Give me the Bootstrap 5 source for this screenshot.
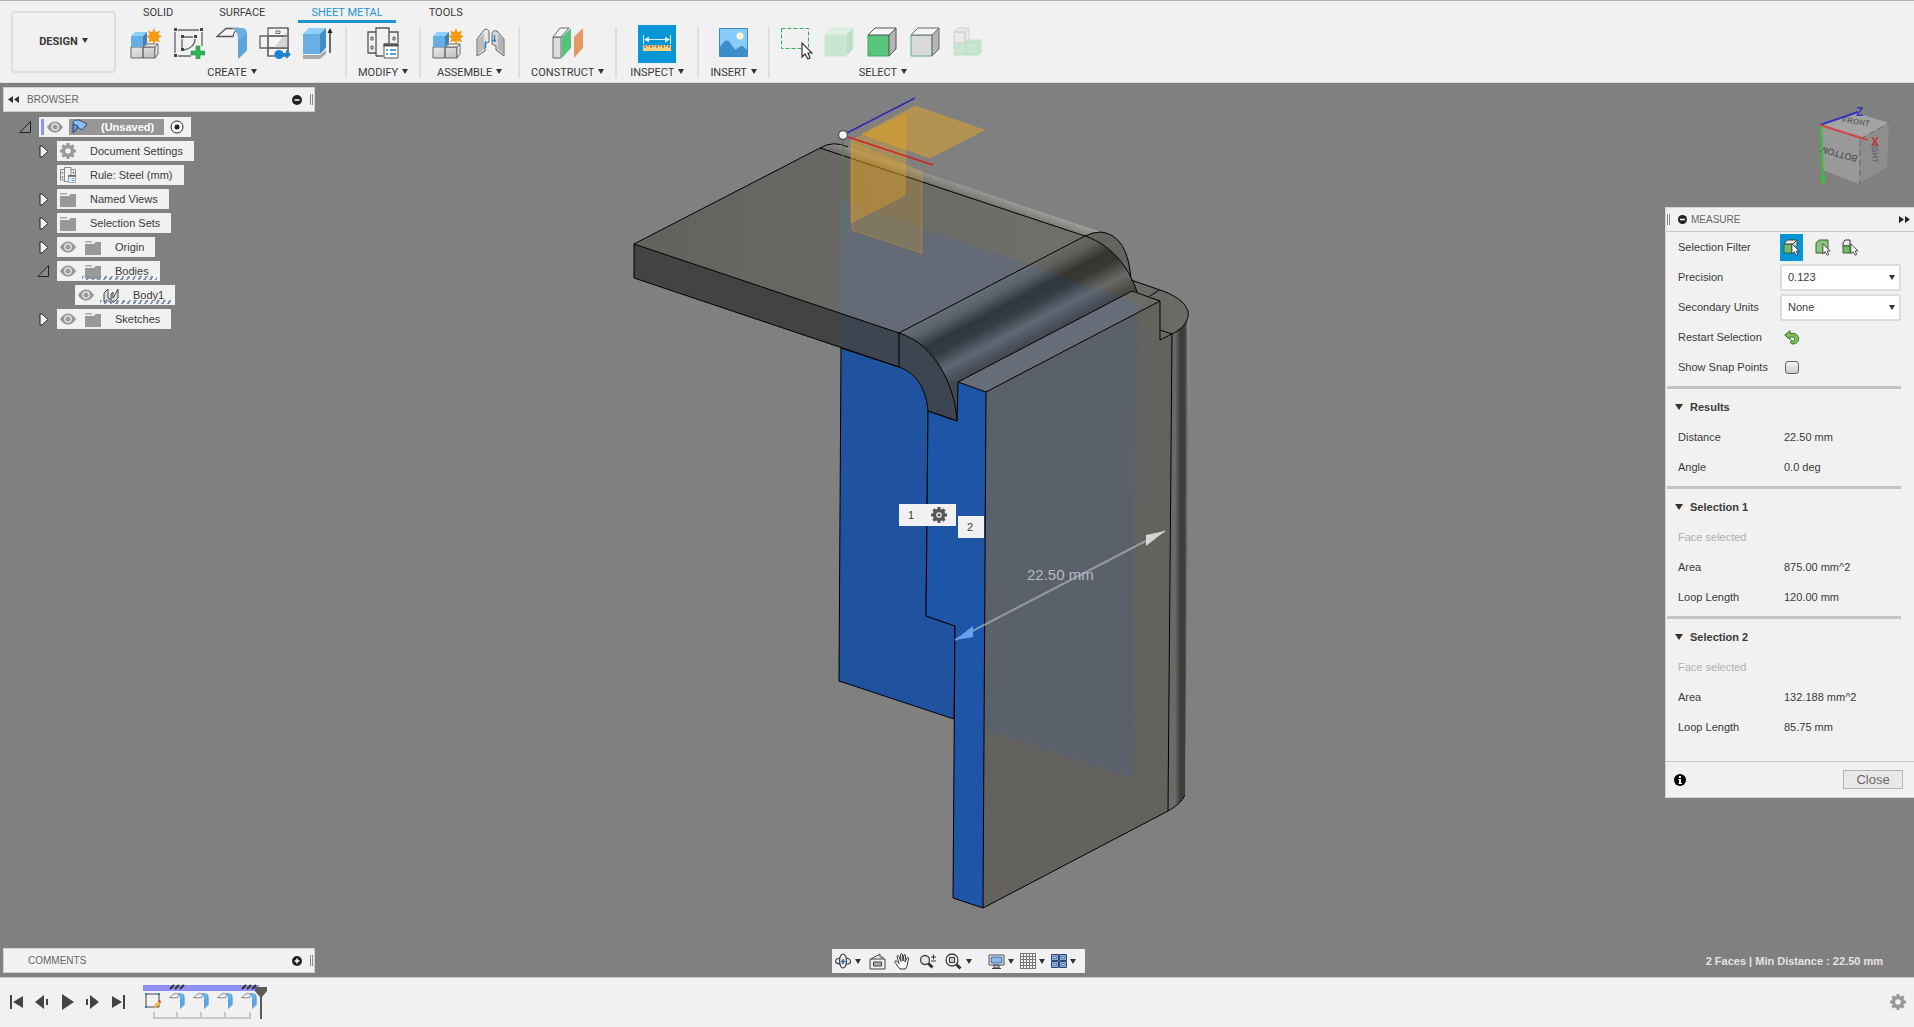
<!DOCTYPE html>
<html lang="en">
<head>
<meta charset="utf-8">
<meta name="viewport" content="width=device-width, initial-scale=1">
<title>Sheet Metal Design</title>
<link rel="stylesheet" href="https://cdn.jsdelivr.net/npm/bootstrap@5.3.0/dist/css/bootstrap.min.css">
<style>
body{font:11px/14px "Liberation Sans",Arial,sans-serif;color:#3a3a3a;background:#808080}
svg{display:block;flex:none}
.bare{border:0;background:none;padding:0;color:inherit;font:inherit;line-height:14px}
.topbar{background:#f1f1f1;border-top:1px solid #b4b4b4;border-bottom:1px solid #dcdcdc;height:83px;font-family:Roboto,"Liberation Sans",sans-serif}
.workspace-btn{border:2px solid #dedede;border-radius:4px;width:105px;height:62px;margin:10px 14px 0 11px;font-weight:700;background:#f1f1f1;color:#3a3a3a}
.tab-row{gap:20px;height:22px}
.tab-row a{color:#3a3a3a;text-decoration:none;padding:5px 13px 0}
.tab-row a.active{color:#1b94d2;border-bottom:3px solid #1b94d2}
.tool-group{padding:0 11px;border-right:2px solid #dedede;height:51px}
.tool-group:first-child{padding-left:0}
.tool-group:last-child{border:0}
.tool-group.roomy{padding:0 13px}
.tool-icons{gap:11px;height:39px;flex:none}
.inspect-on{background:#0696d7;width:38px;height:38px;margin:-2px 0 0}
.caret::after{content:"";display:inline-block;border:3px solid transparent;border-top:5px solid #333;border-bottom:0;margin-left:4px;vertical-align:2px}
.stage{min-height:0}
.scene{position:absolute;inset:0;width:100%;height:100%}
.cube{position:absolute;right:0;top:7px}
.side-left{position:absolute;left:3px;top:4px;width:312px}
.bar-title{background:#f1f1f1;border:1px solid #d0d0d0;height:25px;color:#666;padding:0 1px 0 4px;font-size:10px}
.grip{width:3px;height:11px;border:solid #888;border-width:0 1px}
.tree{padding-top:5px;gap:4px}
.tree-row{height:20px}
.tree-child{padding-left:18px}
.twist{width:46px}
.twist-root{width:28px}
.tree-box{background:#f1f1f1;height:20px;padding:0 11px 0 3px;gap:9px;position:relative;margin-left:8px}
.tree-box span{margin-left:5px}
.twist-root + .tree-box{padding:0 7px 0 2px;gap:3px}
.root-name{background:#969696;color:#fff;font-weight:700;height:16px;padding:0 10px 0 2px;margin:0 3px}
.root-bar{width:3px;height:16px;background:#8f8ff5}
.hatched::after{content:"";position:absolute;left:25px;right:3px;bottom:1px;height:4px;background:repeating-linear-gradient(120deg,#8490ad 0 2px,transparent 2px 5px)}
.comments{position:absolute;left:3px;bottom:4px;width:312px}
.navbar-view{position:absolute;left:832px;bottom:4px;height:24px;background:#f1f1f1;padding:0 9px 0 3px}
.navbar-view button + button{margin-left:8px}
.navbar-view .caret + .caret{margin-left:6px}
.navbar-view .caret::after{margin-left:3px}
.status{position:absolute;right:31px;bottom:9px;color:#e4e4e4;font-weight:700}
.measure{position:absolute;right:0;top:124px;width:249px;background:#f1f1f1;border:1px solid #d4d4d4;border-right:0}
.measure-head{height:24px;border-bottom:1px solid #c8c8c8;color:#666;font-size:10px;padding:0 4px 0 1px}
.line{height:30px;padding-left:12px}
.line > :first-child{width:106px;flex:none}
.line > .wide{margin-left:-4px}
.form-select{width:121px;height:27px;border:2px solid #dcdcdc;border-radius:2px;font-size:11px;line-height:14px;color:#3a3a3a;padding:0 6px;background-size:6px 5px;background-position:right 4px center;--bs-form-select-bg-img:url("data:image/svg+xml,%3csvg xmlns='http://www.w3.org/2000/svg' viewBox='0 0 6 5'%3e%3cpath d='M0 0h6L3 5z' fill='%23333'/%3e%3c/svg%3e")}
.rule-line{height:3px;background:#c3c3c3;margin:4px 13px 3px 1px}
.section-title{height:30px;padding-left:9px;font-weight:700;gap:7px}
.dim{color:#b0b0b0}
.filter-btn{width:23px;height:27px;display:grid;place-items:center}
.filter-on{background:#0696d7}
.snap{appearance:none;width:14px;height:13px;border:1px solid #666;border-radius:3px;background:linear-gradient(#f6f6f6,#c8c8c8);margin-left:1px}
.measure-foot{height:36px;border-top:1px solid #c8c8c8;margin-top:19px;padding:0 11px 0 8px}
.close-btn{width:60px;height:19px;border:1px solid #b4b4b4;background:#e9e9e9;color:#666;font-size:13px;line-height:14px;padding:0}
.bottombar{height:50px;background:#f1f1f1;border-top:1px solid #c8c8c8;padding:0 8px 2px 10px}
.play{gap:12px}
.timeline{margin-left:18px;padding-top:7px;position:relative;height:47px;width:116px}
.track{height:6px;background:#8f8ff5}
.steps{gap:8px;padding:2px 0 0 2px}
.overlay-svg{position:absolute;left:0;top:4px}
.pick{font:11px "Liberation Sans",sans-serif}
.pick-btn{width:18px;height:18px;display:block}
</style>
</head>
<body class="vh-100 d-flex flex-column overflow-hidden">
<svg width="0" height="0" class="position-absolute" aria-hidden="true">
 <defs>
  <linearGradient id="gBox" x2="1" y2="1"><stop stop-color="#ececec"/><stop offset="1" stop-color="#bdbdbd"/></linearGradient>
  <symbol id="newcomp" viewBox="0 0 32 32"><path d="M1 20h12v11H1zM13 20h12v11H13z" fill="url(#gBox)" stroke="#666"/><path d="M13 20l4-3h11l-3 3zM25 31l3-4V17l-3 3z" fill="#eee" stroke="#666"/><path d="M1 9h12v11H1z" fill="#67aee2"/><path d="M1 9l4-4h12l-4 4z" fill="#8fd0fa"/><path d="M13 9l4-4v11l-4 4z" fill="#3c82bb"/><path d="M24 1l1.700 4.300L30 3.500l-1.600 4.300L32 9.500l-3.600 1.700L30 15.500l-4.300-1.700L24 18l-1.700-4.200-4.300 1.700 1.600-4.300L16 9.500l3.600-1.700L18 3.500l4.300 1.800z" fill="#f29b13"/></symbol>
  <symbol id="sketch" viewBox="0 0 32 32"><path d="M5 3h21M2 5v21M29 5v14M5 29h13" stroke="#666" stroke-width="1.300" fill="none"/><path d="M11 10h9M9 12v9M22 12c0 6-5 10-11 11" stroke="#666" stroke-width="1.300" fill="none"/><path d="M1 1h3v3H1zM27 1h3v3h-3zM1 27h3v3H1zM8 8h3v3H8zM21 8h3v3h-3zM8 21h3v3H8z" fill="#444"/><path d="M23 19h4v5h5v4h-5v4h-4v-4h-5v-4h5z" fill="#2fb457" stroke="#1d9143" stroke-width=".6"/></symbol>
  <symbol id="flange" viewBox="0 0 32 32"><path d="M10 1.500h13c-3 1-5 3-6 8H1z" fill="#f5f5f5" stroke="#555" stroke-width="1.300"/><path d="M16 1h10c3 0 5 2 5 6v16l-9 9V14c0-8-2-11-6-13z" fill="#68afe3"/><path d="M22 14v18l9-9V7z" fill="#5ba5dc"/></symbol>
  <symbol id="unfold" viewBox="0 0 32 32"><path d="M9 1h20v28H9zM1 9h28v12H1z" fill="#f4f4f4" stroke="#666" stroke-width="1.300"/><path d="M29 3v18H15z" fill="#d4d4d4"/><path d="M9 9v20M9 9h20M9 21h20M29 1v28" stroke="#666" stroke-width="1.300"/><path d="M17 4h4v2.500h-4z" fill="none" stroke="#666"/><circle cx="20" cy="27.500" r="4.500" fill="#1b83d2"/><path d="M23 26h4v-3l5 4.500-5 4.500v-3h-4z" fill="#1b83d2"/></symbol>
  <symbol id="thicken" viewBox="0 0 32 32"><path d="M1 28h17l6-5v4l-6 5H1z" fill="#aaa"/><path d="M1 7h17v20H1z" fill="#68afe3"/><path d="M1 7l6-6h17l-6 6z" fill="#8fd0fa"/><path d="M18 7l6-6v20l-6 6z" fill="#3f8dca"/><path d="M28 26V4" stroke="#222" stroke-width="1.300"/><path d="M28 1l2.500 5h-5z" fill="#222"/></symbol>
  <symbol id="rules" viewBox="0 0 32 32"><path d="M9 5H1v21h8M9 29V1h13v4h9v11M22 5v11M9 29h7" fill="none" stroke="#555" stroke-width="1.300"/><path d="M4 10h2v3H4zM4 19h2v3H4zM26 10h2v3h-2z" fill="none" stroke="#555"/><path d="M17 17h14v14H17z" fill="#fff" stroke="#555"/><path d="M16.500 16.500h15v3h-15z" fill="#555"/><path d="M19 23h2M23 23h6M19 27h2M23 27h6" stroke="#1b83d2" stroke-width="1.500"/></symbol>
  <symbol id="joint" viewBox="0 0 32 32"><path d="M2 29V12l7-9c3-2 5 0 5 2v10l-4 2v7z" fill="#e4e4e4" stroke="#666"/><path d="M3 27V12l6-6v16z" fill="#bbb"/><path d="M29 29V12l-7-8c-4-1-5 1-5 3v10l4 2v4z" fill="#d4d4d4" stroke="#666"/><path d="M28 27V12l-5-5v15z" fill="#b4b4b4"/><path d="M10.500 14v7M19.500 8v7M17 13.500h4" stroke="#1b83d2" stroke-width="1.300"/></symbol>
  <symbol id="construct" viewBox="0 0 32 32"><path d="M1 10h8v21H1z" fill="#ddd" stroke="#666"/><path d="M1 10l7-9h9l-8 9z" fill="#f4f4f4" stroke="#666"/><path d="M10 10l9-9v20l-9 10z" fill="#53c57b"/><path d="M22 10l9-9v20l-9 10z" fill="#e39866"/></symbol>
  <symbol id="picture" viewBox="0 0 32 32"><path d="M1.500 1.500h28v28h-28z" fill="#8accf9" stroke="#3d8cc9"/><circle cx="22" cy="9" r="3.500" fill="#fdf7d8"/><path d="M2 20c7-11 9-6 13 0 2 3 3 3 5 1s4-3 6-1l3 3v6H2z" fill="#3c8dc9"/></symbol>
  <symbol id="cursor" viewBox="0 0 12 18"><path d="M1 1v14l3-3 3 5 2-1-2-5h4z" fill="#fff" stroke="#333" stroke-width="1.200"/></symbol>
  <symbol id="boxsel" viewBox="0 0 32 32"><path d="M1 8h21v21H1z" fill="var(--f)" stroke="var(--s)"/><path d="M1 8l7-7h21l-7 7z" fill="var(--t)" stroke="var(--k)"/><path d="M22 8l7-7v21l-7 7z" fill="var(--r)" stroke="var(--k)"/></symbol>
  <symbol id="eye" viewBox="0 0 16 12"><path d="M0 6c4-7.500 12-7.500 16 0-4 7.500-12 7.500-16 0z" fill="#999"/><circle cx="8" cy="6" r="3.200" fill="none" stroke="#f1f1f1" stroke-width="1.200"/></symbol>
  <symbol id="folder" viewBox="0 0 16 15"><path d="M0 4h9l1.500-2H16v13H0z" fill="#999"/><path d="M0 1h7v1.500H0z" fill="#aaa"/></symbol>
  <symbol id="gear" viewBox="0 0 16 16"><path d="M8 0v16M0 8h16M2.400 2.400l11.200 11.200M13.600 2.400L2.400 13.600" stroke="currentColor" stroke-width="3"/><circle cx="8" cy="8" r="4.500" fill="none" stroke="currentColor" stroke-width="3.500"/><circle cx="8" cy="8" r="2.800" fill="#f1f1f1"/></symbol>
  <symbol id="right" viewBox="0 0 10 13"><path d="M1 1h2l6 5.500L3 12H1z" fill="#f1f1f1" stroke="#222"/></symbol>
  <symbol id="down" viewBox="0 0 12 12"><path d="M11.500 .5v11H.8z" fill="#888" stroke="#222"/></symbol>
  <symbol id="greenbox" viewBox="0 0 16 16"><path d="M1 5h8v9H1z" fill="#7cb669" stroke="#2f6b2c"/><path d="M1 5l3-4h10l-4 4z" fill="#e6f0e2" stroke="#444"/><path d="M9 6l5-5v6" fill="#cfe0ca" stroke="#444"/></symbol>
 </defs>
</svg>

<header class="topbar d-flex flex-shrink-0">
 <button class="workspace-btn caret">DESIGN</button>
 <div>
  <nav class="tab-row d-flex">
   <a href="#">SOLID</a><a href="#">SURFACE</a><a href="#" class="active">SHEET METAL</a><a href="#">TOOLS</a>
  </nav>
  <div class="d-flex pt-1">
   <div class="tool-group d-flex flex-column align-items-center">
    <div class="tool-icons d-flex align-items-start">
     <button class="bare" aria-label="New component"><svg width="32" height="32"><use href="#newcomp"/></svg></button>
     <button class="bare" aria-label="Sketch"><svg width="32" height="32"><use href="#sketch"/></svg></button>
     <button class="bare" aria-label="Flange"><svg width="32" height="32"><use href="#flange"/></svg></button>
     <button class="bare" aria-label="Flat pattern"><svg width="32" height="32"><use href="#unfold"/></svg></button>
     <button class="bare" aria-label="Extrude"><svg width="32" height="32"><use href="#thicken"/></svg></button>
    </div>
    <button class="bare caret">CREATE</button>
   </div>
   <div class="tool-group d-flex flex-column align-items-center">
    <div class="tool-icons d-flex align-items-start"><button class="bare" aria-label="Rules"><svg width="32" height="32"><use href="#rules"/></svg></button></div>
    <button class="bare caret">MODIFY</button>
   </div>
   <div class="tool-group d-flex flex-column align-items-center">
    <div class="tool-icons d-flex align-items-start"><button class="bare" aria-label="New component"><svg width="32" height="32"><use href="#newcomp"/></svg></button><button class="bare" aria-label="Joint"><svg width="32" height="32"><use href="#joint"/></svg></button></div>
    <button class="bare caret">ASSEMBLE</button>
   </div>
   <div class="tool-group d-flex flex-column align-items-center">
    <div class="tool-icons d-flex align-items-start"><button class="bare" aria-label="Offset plane"><svg width="32" height="32"><use href="#construct"/></svg></button></div>
    <button class="bare caret">CONSTRUCT</button>
   </div>
   <div class="tool-group roomy d-flex flex-column align-items-center">
    <div class="tool-icons d-flex align-items-start"><button class="bare inspect-on" aria-label="Measure"><svg width="38" height="38"><path d="M5 20h28v6H5z" fill="#ffd27d"/><path d="M7 20v3m3-3v2m3-2v3m3-3v2m3-2v3m3-3v2m3-2v3m3-3v2m3-2v3" stroke="#555"/><path d="M5.500 10v9M32.500 10v9M7 14.500h24" stroke="#d9f0fc"/><path d="M6 14.500l5-3v6zM32 14.500l-5-3v6z" fill="#d9f0fc"/></svg></button></div>
    <button class="bare caret">INSPECT</button>
   </div>
   <div class="tool-group d-flex flex-column align-items-center">
    <div class="tool-icons d-flex align-items-start"><button class="bare" aria-label="Insert image"><svg width="32" height="32"><use href="#picture"/></svg></button></div>
    <button class="bare caret">INSERT</button>
   </div>
   <div class="tool-group d-flex flex-column align-items-center">
    <div class="tool-icons d-flex align-items-start">
     <button class="bare" aria-label="Window select"><svg width="32" height="34"><path d="M.5 1.500h27v20H.5z" fill="none" stroke="#35ad5c" stroke-dasharray="4 2"/><use href="#cursor" x="20" y="15" width="12" height="18"/></svg></button>
     <button class="bare" aria-label="Select bodies"><svg width="32" height="32" style="--f:#c9e6d2;--s:#c9e6d2;--t:#dcefe2;--k:#d2eada;--r:#b9dec5"><use href="#boxsel"/></svg></button>
     <button class="bare" aria-label="Select faces"><svg width="32" height="32" style="--f:#57c57d;--s:#3aa961;--t:#f6f6f6;--k:#555;--r:#b4b4b4"><use href="#boxsel"/></svg></button>
     <button class="bare" aria-label="Select edges"><svg width="32" height="32" style="--f:#d9d9d9;--s:#4cb672;--t:#f6f6f6;--k:#666;--r:#b4b4b4"><use href="#boxsel"/></svg></button>
     <button class="bare" aria-label="Select components"><svg width="32" height="32"><path d="M1 16h12v12H1zM13 16h12v12H13zM13 16l4-3h11l-3 3zM25 28l3-3V13l-3 3z" fill="#c9e6d2" stroke="#bddfc8"/><path d="M1 5h11v11H1zM1 5l4-4h11l-4 4zM12 16l4-4V1l-4 4z" fill="#eaeaea" stroke="#d0d0d0"/></svg></button>
    </div>
    <button class="bare caret">SELECT</button>
   </div>
  </div>
 </div>
</header>

<main class="stage flex-grow-1 position-relative overflow-hidden">
 <svg class="scene" viewBox="0 83 1914 894">
  <defs>
   <linearGradient id="plate" gradientUnits="userSpaceOnUse" x1="640" y1="250" x2="1080" y2="230"><stop stop-color="#64625f"/><stop offset="1" stop-color="#70706b"/></linearGradient>
   <linearGradient id="bend" gradientUnits="userSpaceOnUse" x1="898" y1="333" x2="931" y2="396"><stop stop-color="#6b6a66"/><stop offset=".16" stop-color="#5f5e5a"/><stop offset=".36" stop-color="#363431"/><stop offset=".52" stop-color="#3a3936"/><stop offset=".75" stop-color="#6a6965"/><stop offset=".9" stop-color="#53524f"/><stop offset="1" stop-color="#464542"/></linearGradient>
   <linearGradient id="bendCool" gradientUnits="userSpaceOnUse" x1="898" y1="333" x2="931" y2="396"><stop stop-color="#666d78"/><stop offset=".16" stop-color="#59616b"/><stop offset=".36" stop-color="#303740"/><stop offset=".52" stop-color="#343c46"/><stop offset=".75" stop-color="#606873"/><stop offset=".9" stop-color="#4c535e"/><stop offset="1" stop-color="#414852"/></linearGradient>
   <linearGradient id="backround" gradientUnits="userSpaceOnUse" x1="960" y1="196" x2="965" y2="182"><stop stop-color="#706f6b"/><stop offset="1" stop-color="#a5a5a3"/></linearGradient>
   <linearGradient id="tube"><stop stop-color="#6c6b68"/><stop offset=".35" stop-color="#696866"/><stop offset=".6" stop-color="#3b3a38"/><stop offset=".8" stop-color="#403f3c"/><stop offset=".93" stop-color="#777"/><stop offset="1" stop-color="#aaa"/></linearGradient>
   <clipPath id="ghost"><path d="M841 200L1137 302 1132 778 839 681z"/></clipPath>
  </defs>
  <path d="M820 148Q831 140 848 147L1101 232 1085 236z" fill="url(#backround)"/>
  <path d="M634 244L820 148 1085 236 899 333z" fill="url(#plate)"/>
  <path d="M1085 236Q1093 232 1101 232Q1128 235 1131 280Q1114 250 1085 236z" fill="#64635f" stroke="#000"/>
  <path d="M1133 281L1160 290C1184 298 1190 310 1188 317C1186 325 1180 330 1172 334L1160 340V301L1132 291z" fill="#6b6a66"/>
  <path d="M1172 334Q1188 326 1189 313L1185 795Q1181 804 1168 811z" fill="url(#tube)"/>
  <path d="M899 333L1085 236C1114 246 1130 270 1137 292L1132 291 958 382 957 421C955 386 935 344 899 333z" fill="url(#bend)"/>
  <path d="M958 382L1132 291 1160 301 986 392z" fill="#6c6b67"/>
  <path d="M986 392L1160 301V340L1172 334 1168 811 983 908z" fill="#63625e"/>
  <g clip-path="url(#ghost)">
   <path d="M634 244L820 148 1085 236 899 333z" fill="#646b76"/>
   <path d="M899 333L1085 236C1114 246 1130 270 1137 292L1132 291 958 382 957 421C955 386 935 344 899 333z" fill="url(#bendCool)"/>
   <path d="M958 382L1132 291 1160 301 986 392z" fill="#676e79"/>
   <path d="M986 392L1160 301V340L1172 334 1168 811 983 908z" fill="#5b616b"/>
  </g>
  <path d="M634 244L899 333V367L634 278z" fill="#434343"/>
  <path d="M841 314L899 333C935 344 955 386 957 421L928 411C926 388 914 372 899 367L841 348z" fill="#3d4550"/>
  <path d="M841 348L899 367C916 373 926 388 928 411L926 616 955 626 954 719 839 681z" fill="#20539f" stroke="#000"/>
  <path d="M928 411L957 421 958 382 986 392 983 908 953 898 955 626 926 616z" fill="#1e55a7" stroke="#000"/>
  <g fill="none" stroke="#000" stroke-width="1">
   <path d="M634 244L820 148 1085 236 899 333zM634 244V278L899 367V333M820 148Q833 140 848 147"/>
   <path d="M899 333C935 344 955 386 957 421L928 411M1085 236C1114 246 1130 270 1137 292M958 382L1132 291 1160 301 986 392M1160 301V340L1172 334 1160 330"/>
   <path d="M1131 280L1160 290C1184 298 1190 310 1188 317C1186 325 1180 330 1172 334L1168 811 983 908M1150 296L1159 290M1168 811Q1181 804 1185 795"/>
  </g>
  <g fill="#f0a818" stroke="#f0a818" stroke-opacity=".35">
   <path fill-opacity=".45" d="M862 134L915 106 984 130 930 158z"/>
   <path fill-opacity=".34" d="M851 141L906 114 905 195 851 223z"/>
   <path fill-opacity=".2" d="M852 143L922 172V253L852 230z"/>
  </g>
  <path d="M843 135L915 98" stroke="#2b2bb5" stroke-width="1.500"/><path d="M848 137L933 165" stroke="#d32323" stroke-width="1.500"/><path d="M843 140V239" stroke="#3b8a3b"/>
  <circle cx="843" cy="135" r="4.500" fill="#f4f4f4" stroke="#555" stroke-width="1.500"/>
  <path d="M955 640L1165 531" stroke="#c5cad0" stroke-opacity=".55" stroke-width="2"/>
  <path d="M1165 531L1146 535V546z" fill="#d5d5d5"/><path d="M955 640L973 626V637z" fill="#69a0ee"/>
  <text x="1027" y="580" font-size="15" fill="#b4b8bf" font-family="Liberation Sans,sans-serif">22.50 mm</text>
  <g class="pick"><path d="M899 504h57v22h-57zM958 516h26v22h-26z" fill="#f1f1f1"/><text x="908" y="519" fill="#3a3a3a">1</text><text x="967" y="531" fill="#3a3a3a">2</text></g>
  <foreignObject x="930" y="506" width="18" height="18"><button class="bare pick-btn" aria-label="Selection options"><svg width="18" height="18" viewBox="-1 -1 18 18" color="#555"><use href="#gear" width="16" height="16"/><circle cx="8" cy="8" r="1.500" fill="#555"/></svg></button></foreignObject>
 </svg>

 <svg class="cube" width="134" height="110" font-family="Liberation Sans,sans-serif" font-weight="700">
  <path d="M40 35L77 23 109 33 80 49z" fill="#a4a4a4"/><path d="M40 35L80 49 79 94 43 80z" fill="#999"/><path d="M80 49L109 33 107 77 79 94z" fill="#8e8e8e"/>
  <path d="M80 50V94M80 49L109 33" stroke="#666" stroke-dasharray="6 4"/>
  <text transform="translate(78 66) rotate(195)" font-size="9" font-weight="400" fill="#444">BOTTOM</text>
  <text transform="translate(62 32) rotate(9)" font-size="8" fill="#666">FRONT</text>
  <text transform="translate(92 54) rotate(88)" font-size="8" fill="#666">IGHT</text>
  <text x="91" y="56" font-size="12" fill="#c93434">X</text>
  <text x="76" y="26" font-size="12" fill="#3a3ab5">Z</text>
  <path d="M40 35L78 22" stroke="#3535bd" stroke-width="2"/><path d="M40 35L88 50" stroke="#cf4747" stroke-width="2"/><path d="M41 36l2 52" stroke="#35c235" stroke-width="2"/><path d="M40 87h6l-3 9z" fill="#35c235"/>
 </svg>

 <section class="side-left">
  <div class="bar-title d-flex align-items-center"><svg width="11" height="7"><path d="M5 0v7L0 3.500zM11 0v7L6 3.500z" fill="#333"/></svg><span class="ms-2 flex-grow-1">BROWSER</span><button class="bare me-2" aria-label="Collapse"><svg width="10" height="10"><circle cx="5" cy="5" r="5" fill="#222"/><path d="M2.500 5h5" stroke="#fff" stroke-width="1.500"/></svg></button><i class="grip"></i></div>
  <div class="tree d-flex flex-column">
   <div class="tree-row d-flex align-items-center"><button class="bare twist twist-root d-flex justify-content-end" aria-label="Collapse root"><svg width="12" height="12"><use href="#down"/></svg></button>
    <div class="tree-box d-flex align-items-center"><i class="root-bar"></i><svg width="16" height="12"><use href="#eye"/></svg><div class="root-name d-flex align-items-center"><svg width="18" height="16"><path d="M2 5c0-4 3-4 6-4l8 4-5 6-6-4z" fill="#8fc0f2" stroke="#27477c"/><path d="M2 5v9l4-4 1-3z" fill="#5d97d6" stroke="#27477c"/></svg><span class="ms-2 ps-1">(Unsaved)</span></div><svg width="14" height="14"><circle cx="7" cy="7" r="6" fill="#fff" stroke="#222"/><circle cx="7" cy="7" r="2.500" fill="#222"/></svg></div></div>
   <div class="tree-row d-flex align-items-center"><button class="bare twist d-flex justify-content-end" aria-label="Expand"><svg width="10" height="13"><use href="#right"/></svg></button><div class="tree-box d-flex align-items-center"><svg width="16" height="16" color="#999"><use href="#gear"/></svg><span>Document Settings</span></div></div>
   <div class="tree-row d-flex align-items-center"><i class="twist"></i><div class="tree-box d-flex align-items-center"><svg width="16" height="16"><use href="#rules"/></svg><span>Rule: Steel (mm)</span></div></div>
   <div class="tree-row d-flex align-items-center"><button class="bare twist d-flex justify-content-end" aria-label="Expand"><svg width="10" height="13"><use href="#right"/></svg></button><div class="tree-box d-flex align-items-center"><svg width="16" height="15"><use href="#folder"/></svg><span>Named Views</span></div></div>
   <div class="tree-row d-flex align-items-center"><button class="bare twist d-flex justify-content-end" aria-label="Expand"><svg width="10" height="13"><use href="#right"/></svg></button><div class="tree-box d-flex align-items-center"><svg width="16" height="15"><use href="#folder"/></svg><span>Selection Sets</span></div></div>
   <div class="tree-row d-flex align-items-center"><button class="bare twist d-flex justify-content-end" aria-label="Expand"><svg width="10" height="13"><use href="#right"/></svg></button><div class="tree-box d-flex align-items-center"><svg width="16" height="12"><use href="#eye"/></svg><svg width="16" height="15"><use href="#folder"/></svg><span>Origin</span></div></div>
   <div class="tree-row d-flex align-items-center"><button class="bare twist d-flex justify-content-end" aria-label="Collapse"><svg width="12" height="12"><use href="#down"/></svg></button><div class="tree-box hatched d-flex align-items-center"><svg width="16" height="12"><use href="#eye"/></svg><svg width="16" height="15"><use href="#folder"/></svg><span>Bodies</span></div></div>
   <div class="tree-row tree-child d-flex align-items-center"><i class="twist"></i><div class="tree-box hatched d-flex align-items-center"><svg width="16" height="12"><use href="#eye"/></svg><svg width="16" height="15" viewBox="0 0 16 15"><path d="M1 14V5l4-4v9l3 2V6l2-2v6l5-9v9l-4 4H7l-3-2z" fill="#d5dae2" stroke="#444"/></svg><span>Body1</span></div></div>
   <div class="tree-row d-flex align-items-center"><button class="bare twist d-flex justify-content-end" aria-label="Expand"><svg width="10" height="13"><use href="#right"/></svg></button><div class="tree-box d-flex align-items-center"><svg width="16" height="12"><use href="#eye"/></svg><svg width="16" height="15"><use href="#folder"/></svg><span>Sketches</span></div></div>
  </div>
 </section>

 <section class="measure">
  <div class="measure-head d-flex align-items-center"><i class="grip"></i><button class="bare ms-2 me-1" aria-label="Collapse"><svg width="9" height="9"><circle cx="4.500" cy="4.500" r="4.500" fill="#222"/><path d="M2 4.500h5" stroke="#fff" stroke-width="1.500"/></svg></button><span class="flex-grow-1">MEASURE</span><svg width="11" height="7"><path d="M0 0v7l5-3.500zM6 0v7l5-3.500z" fill="#222"/></svg></div>
  <div class="line d-flex align-items-center"><span>Selection Filter</span><div class="wide d-flex gap-1">
   <button class="bare filter-btn filter-on me-1" aria-label="Faces, edges and points"><svg width="17" height="17"><use href="#greenbox" width="16" height="16"/><use href="#cursor" x="8" y="4" width="9" height="13"/></svg></button>
   <button class="bare filter-btn" aria-label="Bodies"><svg width="17" height="17"><path d="M2 4l3-3h9v9l-3 4H2z" fill="#8cc47a" stroke="#2f6b2c"/><use href="#cursor" x="8" y="4" width="9" height="13"/></svg></button>
   <button class="bare filter-btn" aria-label="Components"><svg width="17" height="17"><path d="M2 4l2-3h5v6H2z" fill="#eee" stroke="#333"/><path d="M2 7h7v7H2z" fill="#7cb669" stroke="#2f6b2c"/><use href="#cursor" x="9" y="4" width="9" height="13"/></svg></button></div></div>
  <div class="line d-flex align-items-center"><label for="prec">Precision</label><select id="prec" class="form-select wide"><option>0.123</option></select></div>
  <div class="line d-flex align-items-center"><label for="units">Secondary Units</label><select id="units" class="form-select wide"><option>None</option></select></div>
  <div class="line d-flex align-items-center"><span>Restart Selection</span><button class="bare" aria-label="Restart selection"><svg width="16" height="15"><path d="M.8 5L6 .8V3.500h3c7 0 8 10 0 10.500-3 0-3-3-1.500-4 1 2 4 1 3-1.500C10 7 9 6.800 6 7v2.500z" fill="#7fc05f" stroke="#2e6b20"/></svg></button></div>
  <div class="line d-flex align-items-center"><label for="snap">Show Snap Points</label><input id="snap" type="checkbox" class="snap"></div>
  <div class="rule-line"></div>
  <div class="section-title d-flex align-items-center"><svg width="8" height="6"><path d="M0 0h8L4 6z" fill="#333"/></svg>Results</div>
  <div class="line d-flex align-items-center"><span>Distance</span><span>22.50 mm</span></div>
  <div class="line d-flex align-items-center"><span>Angle</span><span>0.0 deg</span></div>
  <div class="rule-line"></div>
  <div class="section-title d-flex align-items-center"><svg width="8" height="6"><path d="M0 0h8L4 6z" fill="#333"/></svg>Selection 1</div>
  <div class="line dim d-flex align-items-center"><span>Face selected</span></div>
  <div class="line d-flex align-items-center"><span>Area</span><span>875.00 mm^2</span></div>
  <div class="line d-flex align-items-center"><span>Loop Length</span><span>120.00 mm</span></div>
  <div class="rule-line"></div>
  <div class="section-title d-flex align-items-center"><svg width="8" height="6"><path d="M0 0h8L4 6z" fill="#333"/></svg>Selection 2</div>
  <div class="line dim d-flex align-items-center"><span>Face selected</span></div>
  <div class="line d-flex align-items-center"><span>Area</span><span>132.188 mm^2</span></div>
  <div class="line d-flex align-items-center"><span>Loop Length</span><span>85.75 mm</span></div>
  <div class="measure-foot d-flex align-items-center justify-content-between"><svg width="12" height="12"><circle cx="6" cy="6" r="6" fill="#000"/><path d="M5 2h2v2H5zM4.500 5H7v4h1v1H4.500V9H5V6h-.5z" fill="#fff"/></svg><button class="close-btn">Close</button></div>
 </section>

 <div class="comments bar-title d-flex align-items-center"><span class="ms-3 ps-1 flex-grow-1">COMMENTS</span><button class="bare me-2" aria-label="Add comment"><svg width="10" height="10"><circle cx="5" cy="5" r="5" fill="#222"/><path d="M2.500 5h5M5 2.500v5" stroke="#fff" stroke-width="1.500"/></svg></button><i class="grip"></i></div>

 <div class="navbar-view d-flex align-items-center">
  <button class="bare caret d-flex align-items-center" aria-label="Orbit"><svg width="17" height="17"><g fill="none" stroke="#444" stroke-width="1.200"><ellipse cx="8" cy="8" rx="3.500" ry="7"/><path d="M5 5C-1 6-1 11 6 11M11 5c6 1 6 6 0 6"/></g><path d="M8 6v5M5.500 8.500h5" stroke="#2767b5" stroke-width="1.500"/></svg></button>
  <button class="bare" aria-label="Look at"><svg width="17" height="17"><path d="M1 6h15v10H1zM2 6l9-5v3h3v2" fill="#eee" stroke="#444"/><path d="M4.500 9h8v4h-8z" fill="#aaa" stroke="#444"/></svg></button>
  <button class="bare" aria-label="Pan"><svg width="17" height="17"><path d="M6 16L1 9.500c-1-2 1-2 2-1l2 2-2-7c0-2 2-1 2 0l2 5-.5-7c.5-1.500 2-1 2 .5l.5 6 1-6c1-1 2 0 1.500 1L11 9l2-4c1-1 2 0 1.500 1-1 4-1 7-3 10z" fill="#fff" stroke="#333"/></svg></button>
  <button class="bare" aria-label="Zoom"><svg width="18" height="17"><circle cx="6" cy="7" r="4.500" fill="#dceaf0" stroke="#444" stroke-width="1.300"/><path d="M9.500 10.500l4 4" stroke="#333" stroke-width="3"/><path d="M12 4h5M14.500 1.500v5M12 8h5" stroke="#333"/></svg></button>
  <button class="bare caret d-flex align-items-center" aria-label="Fit"><svg width="18" height="17"><circle cx="7" cy="7" r="6" fill="#e8eef0" stroke="#444" stroke-width="1.300"/><path d="M4.500 4.500h5v5h-5z" fill="#ccc" stroke="#333"/><path d="M11.500 11.500l4 4" stroke="#333" stroke-width="3"/></svg></button>
  <button class="bare caret d-flex align-items-center ms-3" aria-label="Display settings"><svg width="17" height="17"><path d="M1 2h15v10H1z" fill="#fff" stroke="#444"/><path d="M3 4h11v6H3z" fill="#8db8e8" stroke="#3b66a0"/><path d="M6 12h5v3H6zM4 15.500h9" fill="#bbb" stroke="#444"/></svg></button>
  <button class="bare caret d-flex align-items-center" aria-label="Grid"><svg width="16" height="16"><path d="M0 .5h16M0 3.500h16M0 6.500h16M0 9.500h16M0 12.500h16M0 15.500h16M.5 0v16M3.500 0v16M6.500 0v16M9.500 0v16M12.500 0v16M15.500 0v16" stroke="#777"/></svg></button>
  <button class="bare caret d-flex align-items-center" aria-label="Viewports"><svg width="16" height="14"><path d="M.5 .5h7v6h-7zM8.500 .5h7v6h-7zM.5 7.500h7v6h-7zM8.500 7.500h7v6h-7z" fill="#8eabd5" stroke="#2e4876"/><path d="M2.500 2.500h3v2h-3zM10.500 2.500h3v2h-3zM2.500 9.500h3v2h-3zM10.500 9.500h3v2h-3z" fill="#c8d8ee" stroke="#5d7fb4"/></svg></button>
 </div>
 <div class="status">2 Faces | Min Distance : 22.50 mm</div>
</main>

<footer class="bottombar d-flex align-items-center flex-shrink-0">
 <div class="play d-flex align-items-center">
  <button class="bare" aria-label="First"><svg width="13" height="14"><path d="M0 0h2v14H0zM13 1v12L3 7z" fill="#444"/></svg></button>
  <button class="bare" aria-label="Back"><svg width="14" height="14"><path d="M9 0v14L0 7zM11 4h2v6h-2z" fill="#444"/></svg></button>
  <button class="bare" aria-label="Play"><svg width="13" height="16"><path d="M1 0v16l12-8z" fill="#444"/></svg></button>
  <button class="bare" aria-label="Forward"><svg width="14" height="14"><path d="M4 0v14l9-7zM0 4h2v6H0z" fill="#444"/></svg></button>
  <button class="bare" aria-label="Last"><svg width="13" height="14"><path d="M11 0h2v14h-2zM0 1v12l10-6z" fill="#444"/></svg></button>
 </div>
 <div class="timeline">
  <div class="track"></div>
  <div class="steps d-flex">
   <button class="bare" aria-label="Sketch step"><svg width="16" height="16"><path d="M1 1h13v13H1z" fill="none" stroke="#444"/><path d="M0 0h2v2H0zM13 0h2v2h-2zM0 13h2v2H0z" fill="#1b83d2"/><path d="M9 15l1-4 4-3 2 2-4 4z" fill="#f3b54e"/><path d="M13 8l2-1 1 2-1 1z" fill="#d33"/></svg></button>
   <button class="bare" aria-label="Flange 1"><svg width="16" height="16"><use href="#flange"/></svg></button>
   <button class="bare" aria-label="Flange 2"><svg width="16" height="16"><use href="#flange"/></svg></button>
   <button class="bare" aria-label="Flange 3"><svg width="16" height="16"><use href="#flange"/></svg></button>
   <button class="bare" aria-label="Flange 4"><svg width="16" height="16"><use href="#flange"/></svg></button>
  </div>
  <svg class="overlay-svg pe-none" width="126" height="40"><path d="M27 7l4-4M32 7l4-4M37 7l4-4M99 7l4-4M104 7l4-4M109 7l4-4" stroke="#333" stroke-width="2"/><path d="M11 30v6h96v-6M34 30v6M58 30v6M82 30v6" fill="none" stroke="#c8c8c8" stroke-width="2"/><path d="M112 5h12v4l-5 6v22h-2V15l-5-6z" fill="#5a5a5a"/></svg>
 </div>
 <button class="bare ms-auto" aria-label="Preferences"><svg width="16" height="16" color="#999"><use href="#gear"/></svg></button>
</footer>
<script src="https://cdn.jsdelivr.net/npm/bootstrap@5.3.0/dist/js/bootstrap.bundle.min.js"></script>
</body>
</html>
